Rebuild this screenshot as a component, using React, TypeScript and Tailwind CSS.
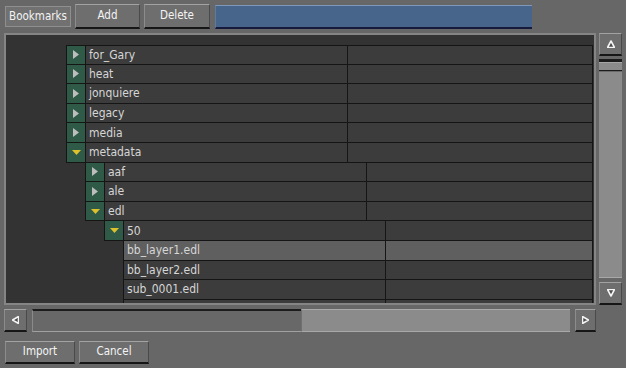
import React from 'react';

type Row = { name: string; level: 0 | 1 | 2 | 3; kind: 'closed' | 'open' | 'file'; selected?: boolean };

const ROWS: Row[] = [
  { name: 'for_Gary', level: 0, kind: 'closed' },
  { name: 'heat', level: 0, kind: 'closed' },
  { name: 'jonquiere', level: 0, kind: 'closed' },
  { name: 'legacy', level: 0, kind: 'closed' },
  { name: 'media', level: 0, kind: 'closed' },
  { name: 'metadata', level: 0, kind: 'open' },
  { name: 'aaf', level: 1, kind: 'closed' },
  { name: 'ale', level: 1, kind: 'closed' },
  { name: 'edl', level: 1, kind: 'open' },
  { name: '50', level: 2, kind: 'open' },
  { name: 'bb_layer1.edl', level: 3, kind: 'file', selected: true },
  { name: 'bb_layer2.edl', level: 3, kind: 'file' },
  { name: 'sub_0001.edl', level: 3, kind: 'file' },
  { name: 'sub_0002.edl', level: 3, kind: 'file' },
];

const INDENT = ['ml-[60px]', 'ml-[79px]', 'ml-[98px]', 'ml-[117px]'];

const FONT = { fontFamily: '"DejaVu Sans Condensed", "DejaVu Sans", sans-serif' };

function Toggle({ open }: { open: boolean }) {
  return (
    <div className="w-[19px] shrink-0 bg-[#2e5a47] border-r border-[#151515] flex items-center justify-center">
      {open ? (
        <svg width="9" height="5" viewBox="0 0 9 5">
          <polygon points="0,0 9,0 4.5,5" fill="#dcc12c" />
        </svg>
      ) : (
        <svg width="6" height="9" viewBox="0 0 6 9">
          <polygon points="0,0 6,4.5 0,9" fill="#bdbdbd" />
        </svg>
      )}
    </div>
  );
}

function TreeRow({ row, first }: { row: Row; first: boolean }) {
  const cell = row.selected ? 'bg-[#5f5f5f]' : 'bg-[#3c3c3c]';
  return (
    <div
      className={`flex h-[19.6px] border-l border-b border-[#151515] ${first ? 'border-t' : ''} ${INDENT[row.level]}`}
    >
      {row.kind !== 'file' && <Toggle open={row.kind === 'open'} />}
      <div className={`w-[262px] shrink-0 border-r border-[#151515] ${cell} flex items-center pl-[3px] text-[12px] text-[#d6d6d6] whitespace-nowrap`}>
        {row.name}
      </div>
      <div className={`flex-1 border-r border-[#151515] ${cell}`} />
    </div>
  );
}

function Arrow({ dir }: { dir: 'up' | 'down' | 'left' | 'right' }) {
  const pts = {
    up: '4,1 7.5,7.5 0.5,7.5',
    down: '0.5,0.5 7.5,0.5 4,7',
    left: '6.5,0.5 6.5,7.5 0.5,4',
    right: '0.5,0.5 6.5,4 0.5,7.5',
  }[dir];
  const w = dir === 'up' || dir === 'down' ? 8 : 7;
  return (
    <svg width={w} height="8" viewBox={`0 0 ${w} 8`}>
      <polygon points={pts} fill="#4a4a4a" stroke="#f4f4f4" strokeWidth="1.6" strokeLinejoin="round" />
    </svg>
  );
}

function Btn({ children, className }: { children?: React.ReactNode; className: string }) {
  return (
    <div
      className={`flex items-center justify-center bg-[#6e6e6e] border-t border-l border-t-[#a2a2a2] border-l-[#8c8c8c] border-r border-r-[#4a4a4a] border-b-2 border-b-[#161616] text-[11.5px] text-[#f4f4f4] ${className}`}
    >
      {children}
    </div>
  );
}

export default function App() {
  return (
    <div className="w-[626px] h-[368px] bg-[#676767] overflow-hidden flex flex-col" style={FONT}>
      <div className="flex items-start pt-[4px] pl-[5px] h-[29px]">
        <div className="mt-[2px] w-[66px] h-[21px] border border-[#8f8f8f] bg-[#717171] flex items-center justify-center text-[11.5px] text-[#f4f4f4]">
          Bookmarks
        </div>
        <Btn className="ml-[4px] w-[65px] h-[25px]">Add</Btn>
        <Btn className="ml-[4px] w-[66px] h-[25px]">Delete</Btn>
        <div className="ml-[5px] mt-[1px] w-[317px] h-[24px] bg-[#47648a] border-t border-t-[#7e98bb] border-l border-l-[#5d7aa0] border-b-2 border-b-[#161a3c]" />
      </div>

      <div className="flex mt-[4px] h-[272px]">
        <div className="ml-[4px] w-[592px] border-2 border-[#858585] bg-[#333333] overflow-hidden pt-[10px] pr-[1px]">
          {ROWS.map((r, i) => (
            <TreeRow key={r.name} row={r} first={i === 0} />
          ))}
        </div>
        <div className="ml-[3px] w-[23px] flex flex-col">
          <Btn className="h-[23px]">
            <Arrow dir="up" />
          </Btn>
          <div className="mt-[3px] flex-1 border-t-[3px] border-[#1c1c1c] flex flex-col">
            <div className="h-[9px] bg-[#8b8b8b] border-t border-[#a6a6a6] border-b border-b-[#1c1c1c]" />
            <div className="flex-1 bg-[#8b8b8b] border-t border-t-[#6a6a6a] border-b border-b-[#a8a8a8]" />
          </div>
          <Btn className="mt-[4px] h-[23px]">
            <Arrow dir="down" />
          </Btn>
        </div>
      </div>

      <div className="flex mt-[4px] h-[24px]">
        <Btn className="ml-[4px] w-[23px] h-[23px]">
          <Arrow dir="left" />
        </Btn>
        <div className="ml-[5px] w-[538px] h-[23px] flex">
          <div className="w-[269px] bg-[#686868] border-t-2 border-t-[#1c1c1c] border-b border-b-[#a0a0a0] border-l border-l-[#8a8a8a]" />
          <div className="flex-1 bg-[#8b8b8b] border-t border-t-[#a8a8a8] border-b border-b-[#a8a8a8] border-l border-l-[#707070]" />
        </div>
        <Btn className="ml-[5px] w-[21px] h-[23px]">
          <Arrow dir="right" />
        </Btn>
      </div>

      <div className="flex mt-[8px]">
        <Btn className="ml-[5px] w-[70px] h-[23px]">Import</Btn>
        <Btn className="ml-[4px] w-[70px] h-[23px]">Cancel</Btn>
      </div>
    </div>
  );
}
